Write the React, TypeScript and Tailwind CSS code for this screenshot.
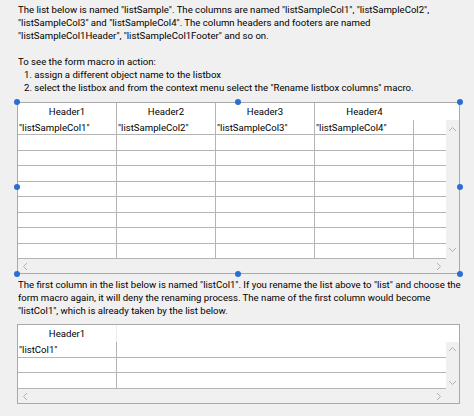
import React from "react";

const Up = () => (
  <svg width="9" height="6" viewBox="0 0 9 6" fill="none" stroke="#b0b0b0" strokeWidth="1">
    <polyline points="1,5 4.5,1.5 8,5" />
  </svg>
);
const Down = () => (
  <svg width="9" height="6" viewBox="0 0 9 6" fill="none" stroke="#b0b0b0" strokeWidth="1">
    <polyline points="1,1 4.5,4.5 8,1" />
  </svg>
);
const Left = () => (
  <svg width="6" height="9" viewBox="0 0 6 9" fill="none" stroke="#b0b0b0" strokeWidth="1">
    <polyline points="5,1 1.5,4.5 5,8" />
  </svg>
);
const Right = () => (
  <svg width="6" height="9" viewBox="0 0 6 9" fill="none" stroke="#b0b0b0" strokeWidth="1">
    <polyline points="1,1 4.5,4.5 1,8" />
  </svg>
);

const Handle = ({ className }: { className: string }) => (
  <span className={`absolute w-[6px] h-[6px] rounded-full bg-[#2a6dd3] ${className}`} />
);

const HScroll = () => (
  <div className="flex h-[14px] bg-[#f0f0f0]">
    <div className="flex-1 flex items-center justify-between pl-[4px] pr-[4px]">
      <Left />
      <Right />
    </div>
    <div className="w-[13px]" />
  </div>
);

const headers = ["Header1", "Header2", "Header3", "Header4"];
const firstRow = ['"listSampleCol1"', '"listSampleCol2"', '"listSampleCol3"', '"listSampleCol4"'];

const MainList = () => {
  const rows = Array.from({ length: 9 }, (_, i) => i);
  return (
    <div className="relative ml-[17px] mt-[8px] w-[443px] border border-[#a9a9a9] bg-white">
      {/* header */}
      <div className="flex h-[17px]">
        {headers.map((h, i) => (
          <div
            key={h}
            className={`w-[99px] flex items-center justify-center ${i < 3 ? "border-r border-[#b4b4b4]" : ""}`}
          >
            {h}
          </div>
        ))}
        <div className="flex-1" />
      </div>
      {/* body */}
      <div className="flex h-[139px]">
        <div className="w-[428px] grid grid-rows-9">
          {rows.map((r) => (
            <div key={r} className="flex border-b border-[#b4b4b4]">
              {[0, 1, 2, 3].map((c) => (
                <div key={c} className="w-[99px] border-r border-[#b4b4b4] pl-[1px] flex items-center whitespace-nowrap">
                  {r === 0 ? firstRow[c] : ""}
                </div>
              ))}
              <div className="flex-1" />
            </div>
          ))}
        </div>
        <div className="w-[13px] bg-[#f0f0f0] flex flex-col items-center justify-between pt-[6px] pb-[6px]">
          <Up />
          <Down />
        </div>
      </div>
      <HScroll />
      <Handle className="-left-[4px] -top-[4px]" />
      <Handle className="left-[217px] -top-[4px]" />
      <Handle className="-right-[4px] -top-[4px]" />
      <Handle className="-left-[4px] top-[81px]" />
      <Handle className="-right-[4px] top-[81px]" />
      <Handle className="-left-[4px] -bottom-[4px]" />
      <Handle className="left-[217px] -bottom-[4px]" />
      <Handle className="-right-[4px] -bottom-[4px]" />
    </div>
  );
};

const SecondList = () => (
  <div className="ml-[17px] mt-[7px] w-[443px] border border-[#a9a9a9] bg-white">
    <div className="flex h-[17px]">
      <div className="w-[99px] flex items-center justify-center border-r border-[#ececec]">Header1</div>
      <div className="flex-1" />
    </div>
    <div className="flex h-[47px]">
      <div className="w-[428px] grid grid-rows-3">
        {[0, 1, 2].map((r) => (
          <div key={r} className="flex border-b border-[#b4b4b4]">
            <div className="w-[99px] border-r border-[#b4b4b4] pl-[1px] flex items-center">
              {r === 0 ? '"listCol1"' : ""}
            </div>
            <div className="flex-1" />
          </div>
        ))}
      </div>
      <div className="w-[13px] bg-[#f0f0f0] flex flex-col items-center justify-between pt-[4px] pb-[3px]">
        <Up />
        <Down />
      </div>
    </div>
    <HScroll />
  </div>
);

export default function App() {
  return (
    <div className="w-[474px] h-[416px] overflow-hidden bg-[#f0f0f0] text-black text-[9.6px] leading-[13px] font-['Roboto',sans-serif]">
      <div className="pl-[18px] pt-[3px] whitespace-nowrap">
        <p>
          The list below is named "listSample". The columns are named "listSampleCol1", "listSampleCol2",
          <br />
          "listSampleCol3" and "listSampleCol4". The column headers and footers are named
          <br />
          "listSampleCol1Header", "listSampleCol1Footer" and so on.
        </p>
        <p className="mt-[13px]">To see the form macro in action:</p>
        <p className="pl-[6px]">1. assign a different object name to the listbox</p>
        <p className="pl-[6px]">2. select the listbox and from the context menu select the "Rename listbox columns" macro.</p>
      </div>
      <MainList />
      <div className="pl-[18px] mt-[4px] whitespace-nowrap">
        <p>
          The first column in the list below is named "listCol1". If you rename the list above to "list" and choose the
          <br />
          form macro again, it will deny the renaming process. The name of the first column would become
          <br />
          "listCol1", which is already taken by the list below.
        </p>
      </div>
      <SecondList />
    </div>
  );
}
